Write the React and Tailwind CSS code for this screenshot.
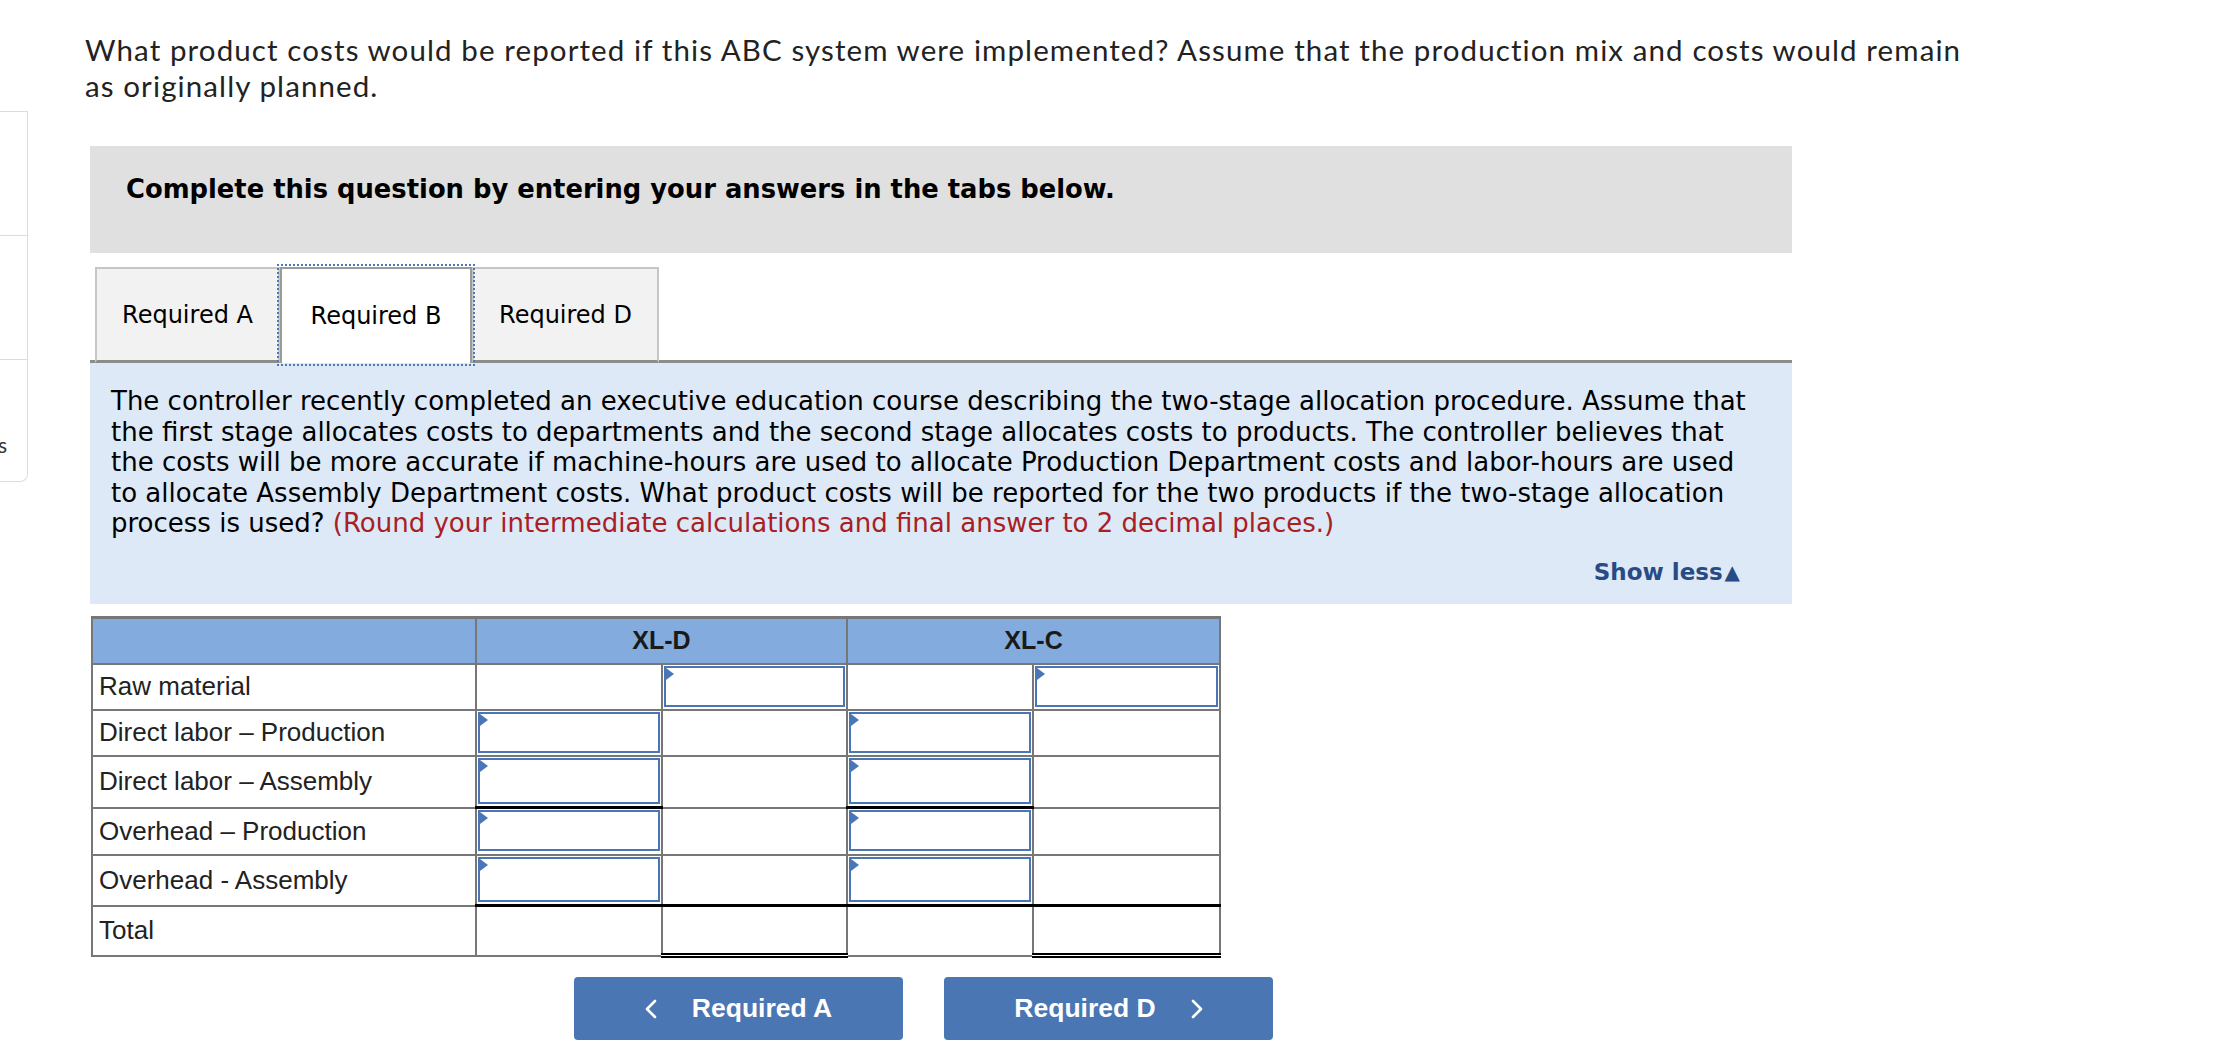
import React from "react";

const rows = [
  { label: "Raw material", h: "h-[46px]", inputs: [false, true, false, true] },
  { label: "Direct labor – Production", h: "h-[46px]", inputs: [true, false, true, false] },
  { label: "Direct labor – Assembly", h: "h-[52px]", inputs: [true, false, true, false], rule: [true, false, true, false] },
  { label: "Overhead – Production", h: "h-[47px]", inputs: [true, false, true, false] },
  { label: "Overhead - Assembly", h: "h-[51px]", inputs: [true, false, true, false], rule: [true, true, true, true] },
];

function InputBox({ tall }) {
  return (
    <div className={`relative border-2 border-[#4a76b8] bg-white ${tall}`}>
      <span className="absolute left-0 top-0 h-0 w-0 border-y-[6px] border-l-[8px] border-y-transparent border-l-[#4a76b8]" />
    </div>
  );
}

function Chevron({ dir }) {
  return (
    <svg width="12" height="20" viewBox="0 0 12 20" fill="none" stroke="white" strokeWidth="2.6" strokeLinecap="round" strokeLinejoin="round">
      {dir === "left" ? <path d="M10 2 L2 10 L10 18" /> : <path d="M2 2 L10 10 L2 18" />}
    </svg>
  );
}

export default function App() {
  return (
    <div className="flex min-h-[1053px] bg-white text-[#222]">
      {/* cut-off side panel */}
      <aside className="w-[28px] shrink-0 pt-[111px]">
        <div className="flex h-[371px] flex-col rounded-br-lg border border-l-0 border-[#dcdcdc]">
          <div className="h-[124px] border-b border-[#dcdcdc]" />
          <div className="h-[124px] border-b border-[#dcdcdc]" />
          <div className="flex flex-1 items-end overflow-hidden pb-[26px]">
            <span className="ml-[-2px] font-['Lato'] text-[21px] leading-none text-[#333]">s</span>
          </div>
        </div>
      </aside>

      <main className="ml-[57px] pt-[32px]">
        <p className="whitespace-nowrap font-['Lato',sans-serif] text-[29.5px] leading-[35.5px] tracking-[1.1px] text-[#222]">
          What product costs would be reported if this ABC system were implemented? Assume that the production mix and costs would remain
          <br />
          as originally planned.
        </p>

        <div className="ml-[5px] mt-[43px] w-[1702px]">
          <div className="h-[107px] bg-[#e0e0e0] pl-[36px] pt-[28px] font-['DejaVu_Sans',sans-serif] text-[25.8px] font-bold leading-[30px] text-black">
            Complete this question by entering your answers in the tabs below.
          </div>

          {/* tabs */}
          <div className="mt-[14px] flex h-[96px] items-stretch font-['DejaVu_Sans',sans-serif] text-[24px] text-black">
            <div className="w-[5px] border-b-[3px] border-[#8c8c8c]" />
            <div className="flex w-[185px] items-center justify-center border-2 border-b-[3px] border-[#c6c6c6] border-b-[#8c8c8c] bg-[#f2f2f2]">
              Required A
            </div>
            <div className="relative z-10 flex w-[192px] items-center justify-center border-2 border-b-0 border-[#9a9a9a] bg-white outline-2 outline-offset-[1px] outline-dotted outline-[#4a7ab8]">
              Required B
            </div>
            <div className="flex w-[187px] items-center justify-center border-2 border-b-[3px] border-[#c6c6c6] border-b-[#8c8c8c] bg-[#f2f2f2]">
              Required D
            </div>
            <div className="flex-1 border-b-[3px] border-[#8c8c8c]" />
          </div>

          {/* prompt */}
          <div className="flex h-[241px] flex-col bg-[#dde9f7] pl-[21px] pr-[52px] pt-[23px] font-['DejaVu_Sans',sans-serif]">
            <p className="whitespace-nowrap text-[26px] leading-[30.5px] text-black">
              The controller recently completed an executive education course describing the two-stage allocation procedure. Assume that
              <br />
              the first stage allocates costs to departments and the second stage allocates costs to products. The controller believes that
              <br />
              the costs will be more accurate if machine-hours are used to allocate Production Department costs and labor-hours are used
              <br />
              to allocate Assembly Department costs. What product costs will be reported for the two products if the two-stage allocation
              <br />
              process is used? <span className="text-[#a8201f]">(Round your intermediate calculations and final answer to 2 decimal places.)</span>
            </p>
            <div className="mt-[19px] flex justify-end">
              <button className="flex items-center gap-[2px] text-[23px] font-bold leading-[28px] text-[#284a85]">
                Show less
                <span className="text-[20px]">▲</span>
              </button>
            </div>
          </div>

          {/* answer table */}
          <table className="ml-[1px] mt-[12px] w-[1128px] table-fixed border-collapse font-['Liberation_Sans',Arial,sans-serif] text-[26px]">
            <colgroup>
              <col className="w-[384px]" />
              <col className="w-[186px]" />
              <col className="w-[185px]" />
              <col className="w-[186px]" />
              <col className="w-[187px]" />
            </colgroup>
            <thead>
              <tr className="h-[46px] bg-[#83abdd]">
                <th className="border-2 border-t-[3px] border-[#777]" />
                <th colSpan={2} className="border-2 border-t-[3px] border-[#777] text-[25px] font-bold text-[#1a1a1a]">XL-D</th>
                <th colSpan={2} className="border-2 border-t-[3px] border-[#777] text-[25px] font-bold text-[#1a1a1a]">XL-C</th>
              </tr>
            </thead>
            <tbody>
              {rows.map((r) => (
                <tr key={r.label} className={r.h}>
                  <td className="border-2 border-[#777] pl-[6px] text-[#222]">{r.label}</td>
                  {r.inputs.map((inp, i) => (
                    <td
                      key={i}
                      className={`border-2 border-[#777] p-[1px] align-top ${r.rule && r.rule[i] ? "border-b-[3px] border-b-black" : ""}`}
                    >
                      {inp ? <InputBox tall={r.h === "h-[52px]" ? "h-[46px]" : r.h === "h-[51px]" ? "h-[45px]" : "h-[41px]"} /> : null}
                    </td>
                  ))}
                </tr>
              ))}
              <tr className="h-[50px]">
                <td className="border-2 border-[#777] pl-[6px] text-[#222]">Total</td>
                <td className="border-2 border-[#777]" />
                <td className="border-2 border-b-[5px] border-[#777] border-b-black [border-bottom-style:double]" />
                <td className="border-2 border-[#777]" />
                <td className="border-2 border-b-[5px] border-[#777] border-b-black [border-bottom-style:double]" />
              </tr>
            </tbody>
          </table>

          {/* navigation */}
          <div className="ml-[484px] mt-[19px] flex gap-[41px] font-['Liberation_Sans',Arial,sans-serif] text-[26.5px] font-bold text-white">
            <button className="flex h-[63px] w-[329px] items-center justify-center gap-[35px] rounded-[4px] bg-[#4a76b3]">
              <Chevron dir="left" />
              <span>Required A</span>
            </button>
            <button className="flex h-[63px] w-[329px] items-center justify-center gap-[35px] rounded-[4px] bg-[#4a76b3]">
              <span>Required D</span>
              <Chevron dir="right" />
            </button>
          </div>
        </div>
      </main>
    </div>
  );
}
